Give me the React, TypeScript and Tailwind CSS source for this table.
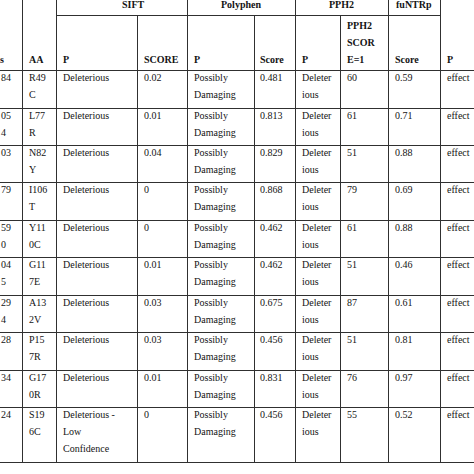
const rows: string[][][] = [
  [['84'], ['R49', 'C'], ['Deleterious'], ['0.02'], ['Possibly', 'Damaging'], ['0.481'], ['Deleter', 'ious'], ['60'], ['0.59'], ['effect']],
  [['05', '4'], ['L77', 'R'], ['Deleterious'], ['0.01'], ['Possibly', 'Damaging'], ['0.813'], ['Deleter', 'ious'], ['61'], ['0.71'], ['effect']],
  [['03'], ['N82', 'Y'], ['Deleterious'], ['0.04'], ['Possibly', 'Damaging'], ['0.829'], ['Deleter', 'ious'], ['51'], ['0.88'], ['effect']],
  [['79'], ['I106', 'T'], ['Deleterious'], ['0'], ['Possibly', 'Damaging'], ['0.868'], ['Deleter', 'ious'], ['79'], ['0.69'], ['effect']],
  [['59', '0'], ['Y11', '0C'], ['Deleterious'], ['0'], ['Possibly', 'Damaging'], ['0.462'], ['Deleter', 'ious'], ['61'], ['0.88'], ['effect']],
  [['04', '5'], ['G11', '7E'], ['Deleterious'], ['0.01'], ['Possibly', 'Damaging'], ['0.462'], ['Deleter', 'ious'], ['51'], ['0.46'], ['effect']],
  [['29', '4'], ['A13', '2V'], ['Deleterious'], ['0.03'], ['Possibly', 'Damaging'], ['0.675'], ['Deleter', 'ious'], ['87'], ['0.61'], ['effect']],
  [['28'], ['P15', '7R'], ['Deleterious'], ['0.03'], ['Possibly', 'Damaging'], ['0.456'], ['Deleter', 'ious'], ['51'], ['0.81'], ['effect']],
  [['34'], ['G17', '0R'], ['Deleterious'], ['0.01'], ['Possibly', 'Damaging'], ['0.831'], ['Deleter', 'ious'], ['76'], ['0.97'], ['effect']],
  [['24'], ['S19', '6C'], ['Deleterious -', 'Low', 'Confidence'], ['0'], ['Possibly', 'Damaging'], ['0.456'], ['Deleter', 'ious'], ['55'], ['0.52'], ['effect']],
]

function Lines({ lines }: { lines: string[] }) {
  return (
    <div className="-mt-[2px]">
      {lines.map((l, i) => (
        <div key={i} className="whitespace-nowrap">
          {l}
        </div>
      ))}
    </div>
  )
}

export default function App() {
  return (
    <div className="h-[474px] w-[474px] overflow-hidden bg-white">
      <div
        className="-mt-[9px] grid w-max grid-cols-[22px_33px_80px_49px_66px_40px_44px_47px_51px_60px] grid-rows-[23px_54px_37px_36px_36px_37px_36px_37px_36px_37px_36px_54px] gap-px bg-[#303030] py-px text-[10px] leading-[17px] text-[#141414]"
        style={{ fontFamily: '"Liberation Serif", "Times New Roman", serif' }}
      >
        {/* header */}
        <div className="row-span-2 flex items-end bg-white pb-[2px] font-bold">s</div>
        <div className="row-span-2 flex items-end bg-white pb-[2px] pl-[6px] font-bold">AA</div>
        <div className="col-span-2 bg-white pl-[65px] pt-[4px] font-bold">SIFT</div>
        <div className="col-span-2 bg-white pl-[33px] pt-[4px] font-bold">Polyphen</div>
        <div className="col-span-2 bg-white pl-[33px] pt-[4px] font-bold">PPH2</div>
        <div className="bg-white pl-[7px] pt-[4px] font-bold">fuNTRp</div>
        <div className="row-span-2 flex items-end bg-white pb-[2px] pl-[6px] font-bold">P</div>

        <div className="flex items-end bg-white pb-[2px] pl-[6px] font-bold">P</div>
        <div className="flex items-end bg-white pb-[2px] pl-[6px] font-bold">SCORE</div>
        <div className="flex items-end bg-white pb-[2px] pl-[6px] font-bold">P</div>
        <div className="flex items-end bg-white pb-[2px] pl-[5px] font-bold">Score</div>
        <div className="flex items-end bg-white pb-[2px] pl-[6px] font-bold">P</div>
        <div className="flex items-end bg-white pb-[2px] pl-[6px] font-bold">
          <div>
            <div>PPH2</div>
            <div>SCOR</div>
            <div>E=1</div>
          </div>
        </div>
        <div className="flex items-end bg-white pb-[2px] pl-[6px] font-bold">Score</div>

        {/* body */}
        {rows.map((r, ri) =>
          r.map((cell, ci) => (
            <div
              key={`${ri}-${ci}`}
              className={ci === 0 ? 'bg-white pl-px' : ci === 5 ? 'bg-white pl-[5px]' : 'bg-white pl-[6px]'}
            >
              <Lines lines={cell} />
            </div>
          ))
        )}
      </div>
    </div>
  )
}
